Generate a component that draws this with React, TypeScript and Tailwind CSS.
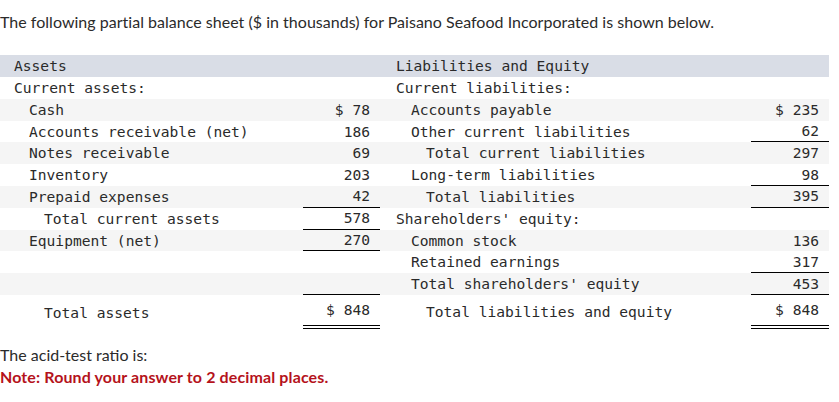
import React from "react";

type Cell = { label?: string; indent?: number; amount?: string; line?: "single" | "double" };
type Row = { left: Cell; right: Cell; stripe: boolean; tall?: boolean };

const rows: Row[] = [
  { left: { label: "Current assets:", indent: 0 }, right: { label: "Current liabilities:", indent: 0 }, stripe: false },
  { left: { label: "Cash", indent: 1, amount: "$ 78" }, right: { label: "Accounts payable", indent: 1, amount: "$ 235" }, stripe: true },
  { left: { label: "Accounts receivable (net)", indent: 1, amount: "186" }, right: { label: "Other current liabilities", indent: 1, amount: "62", line: "single" }, stripe: false },
  { left: { label: "Notes receivable", indent: 1, amount: "69" }, right: { label: "Total current liabilities", indent: 2, amount: "297" }, stripe: true },
  { left: { label: "Inventory", indent: 1, amount: "203" }, right: { label: "Long-term liabilities", indent: 1, amount: "98", line: "single" }, stripe: false },
  { left: { label: "Prepaid expenses", indent: 1, amount: "42", line: "single" }, right: { label: "Total liabilities", indent: 2, amount: "395", line: "single" }, stripe: true },
  { left: { label: "Total current assets", indent: 2, amount: "578", line: "single" }, right: { label: "Shareholders' equity:", indent: 0 }, stripe: false },
  { left: { label: "Equipment (net)", indent: 1, amount: "270", line: "single" }, right: { label: "Common stock", indent: 1, amount: "136" }, stripe: true },
  { left: {}, right: { label: "Retained earnings", indent: 1, amount: "317", line: "single" }, stripe: false },
  { left: { line: "single" }, right: { label: "Total shareholders' equity", indent: 1, amount: "453", line: "single" }, stripe: true },
  { left: { label: "Total assets", indent: 2, amount: "$ 848", line: "double" }, right: { label: "Total liabilities and equity", indent: 2, amount: "$ 848", line: "double" }, stripe: false, tall: true },
];

const indentClass = (i?: number) => (i === 2 ? "pl-[44px]" : i === 1 ? "pl-[29px]" : "pl-[14px]");

function Amount({ cell, width, pad }: { cell: Cell; width: string; pad: string }) {
  const line =
    cell.line === "single"
      ? "border-b border-black"
      : cell.line === "double"
      ? "border-b-[4px] border-double border-black"
      : "";
  return (
    <div className={`${width} h-full flex items-center justify-end ${pad} ${line}`}>
      {cell.amount ?? ""}
    </div>
  );
}

export default function App() {
  return (
    <div className="w-[839px] h-[402px] bg-white overflow-hidden relative">
      <p className="pt-[13px] text-[16px] leading-[18px] text-[#2b2b2b] tracking-[0.02px]" style={{ fontFamily: "Lato, 'Open Sans', sans-serif" }}>
        The following partial balance sheet ($ in thousands) for Paisano Seafood Incorporated is shown below.
      </p>

      <div className="mt-[24px] w-[829px] text-[14.6px] text-[#2a2a2a]" style={{ fontFamily: "'DejaVu Sans Mono', 'Liberation Mono', monospace" }}>
        <div className="flex h-[22px] items-center bg-[#d9dde6]">
          <div className="w-[380px] pl-[14px]">Assets</div>
          <div className="flex-1 pl-[16px]">Liabilities and Equity</div>
        </div>
        {rows.map((r, i) => (
          <div key={i} className={`flex ${r.tall ? "h-[34px]" : "h-[21.8px]"} ${r.stripe ? "bg-[#f5f5f5]" : "bg-white"}`}>
            <div className={`w-[303px] h-full flex items-center ${indentClass(r.left.indent)} ${r.tall ? "pt-[1px]" : ""}`}>{r.left.label ?? ""}</div>
            <Amount cell={r.left} width="w-[77px]" pad="pr-[10px]" />
            <div className={`w-[371px] h-full flex items-center ${indentClass(r.right.indent)} ml-[2px] -mr-[2px]`}>{r.right.label ?? ""}</div>
            <Amount cell={r.right} width="w-[78px]" pad="pr-[10px]" />
          </div>
        ))}
      </div>

      <div className="mt-[15px] text-[16px] leading-[22px]" style={{ fontFamily: "Lato, 'Open Sans', sans-serif" }}>
        <p className="text-[#2b2b2b]">The acid-test ratio is:</p>
        <p className="text-[#b5121b] font-bold tracking-[0.12px]">Note: Round your answer to 2 decimal places.</p>
      </div>
    </div>
  );
}
